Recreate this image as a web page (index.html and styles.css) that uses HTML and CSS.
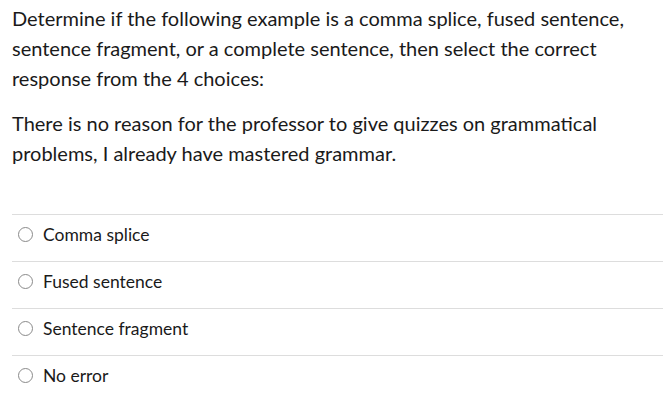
FILE: index.html
```html
<!DOCTYPE html>
<html lang="en">
<head>
  <meta charset="UTF-8" />
  <title>Question</title>
  <link rel="stylesheet" href="styles.css">
</head>
<body>
  <div class="question">
    <div class="prompt">
      <p>Determine if the following example is a comma splice, fused sentence, sentence fragment, or a complete sentence, then select the correct response from the 4 choices:</p>
      <p>There is no reason for the professor to give quizzes on grammatical problems, I already have mastered grammar.</p>
    </div>

    <ul class="answers">
      <li><label><input type="radio" name="answer"> <span>Comma splice</span></label></li>
      <li><label><input type="radio" name="answer"> <span>Fused sentence</span></label></li>
      <li><label><input type="radio" name="answer"> <span>Sentence fragment</span></label></li>
      <li><label><input type="radio" name="answer"> <span>No error</span></label></li>
    </ul>
  </div>
</body>
</html>
```

FILE: styles.css
```css
* {
  box-sizing: border-box;
}

body {
  margin: 0;
  font-family: Lato, "Liberation Sans", sans-serif;
  background: #fff;
}

.question {
  padding: 3px 7px 0 12px;
}

.prompt p {
  margin: 0 0 15px;
  font-size: 20px;
  line-height: 30px;
  color: #1a1a1a;
}

.answers {
  list-style: none;
  margin: 0;
  padding: 0;
  margin-top: 46px;
}

.answers li {
  border-top: 1px solid #dddddd;
  height: 47px;
  display: flex;
  align-items: center;
  padding-bottom: 7px;
}

.answers label {
  display: flex;
  align-items: center;
  gap: 10px;
  padding-left: 6px;
  font-size: 17.5px;
  color: #1a1a1a;
}

.answers input {
  appearance: none;
  margin: 0;
  width: 15px;
  height: 15px;
  border: 1px solid #8a8a8a;
  border-radius: 50%;
  background: #fff;
}
```
